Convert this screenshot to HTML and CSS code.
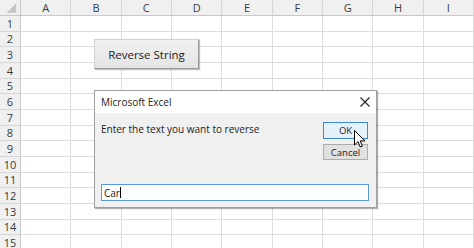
FILE: index.html
```html
<!DOCTYPE html>
<html>
<head>
<meta charset="utf-8">
<link rel="stylesheet" href="styles.css">
</head>
<body>
<div class="sheet">
  <div class="corner"><svg width="21" height="16" viewBox="0 0 21 16"><polygon points="17,3 17,13 7,13" fill="#c4c4c4"/></svg></div>
  <div class="colhead">A</div><div class="colhead">B</div><div class="colhead">C</div><div class="colhead">D</div><div class="colhead">E</div><div class="colhead">F</div><div class="colhead">G</div><div class="colhead">H</div><div class="colhead">I</div>
  <div class="rowhead">1</div><div class="cell"></div><div class="cell"></div><div class="cell"></div><div class="cell"></div><div class="cell"></div><div class="cell"></div><div class="cell"></div><div class="cell"></div><div class="cell"></div>
  <div class="rowhead">2</div><div class="cell"></div><div class="cell"></div><div class="cell"></div><div class="cell"></div><div class="cell"></div><div class="cell"></div><div class="cell"></div><div class="cell"></div><div class="cell"></div>
  <div class="rowhead">3</div><div class="cell"></div><div class="cell"></div><div class="cell"></div><div class="cell"></div><div class="cell"></div><div class="cell"></div><div class="cell"></div><div class="cell"></div><div class="cell"></div>
  <div class="rowhead">4</div><div class="cell"></div><div class="cell"></div><div class="cell"></div><div class="cell"></div><div class="cell"></div><div class="cell"></div><div class="cell"></div><div class="cell"></div><div class="cell"></div>
  <div class="rowhead">5</div><div class="cell"></div><div class="cell"></div><div class="cell"></div><div class="cell"></div><div class="cell"></div><div class="cell"></div><div class="cell"></div><div class="cell"></div><div class="cell"></div>
  <div class="rowhead">6</div><div class="cell"></div><div class="cell"></div><div class="cell"></div><div class="cell"></div><div class="cell"></div><div class="cell"></div><div class="cell"></div><div class="cell"></div><div class="cell"></div>
  <div class="rowhead">7</div><div class="cell"></div><div class="cell"></div><div class="cell"></div><div class="cell"></div><div class="cell"></div><div class="cell"></div><div class="cell"></div><div class="cell"></div><div class="cell"></div>
  <div class="rowhead">8</div><div class="cell"></div><div class="cell"></div><div class="cell"></div><div class="cell"></div><div class="cell"></div><div class="cell"></div><div class="cell"></div><div class="cell"></div><div class="cell"></div>
  <div class="rowhead">9</div><div class="cell"></div><div class="cell"></div><div class="cell"></div><div class="cell"></div><div class="cell"></div><div class="cell"></div><div class="cell"></div><div class="cell"></div><div class="cell"></div>
  <div class="rowhead">10</div><div class="cell"></div><div class="cell"></div><div class="cell"></div><div class="cell"></div><div class="cell"></div><div class="cell"></div><div class="cell"></div><div class="cell"></div><div class="cell"></div>
  <div class="rowhead">11</div><div class="cell"></div><div class="cell"></div><div class="cell"></div><div class="cell"></div><div class="cell"></div><div class="cell"></div><div class="cell"></div><div class="cell"></div><div class="cell"></div>
  <div class="rowhead">12</div><div class="cell"></div><div class="cell"></div><div class="cell"></div><div class="cell"></div><div class="cell"></div><div class="cell"></div><div class="cell"></div><div class="cell"></div><div class="cell"></div>
  <div class="rowhead">13</div><div class="cell"></div><div class="cell"></div><div class="cell"></div><div class="cell"></div><div class="cell"></div><div class="cell"></div><div class="cell"></div><div class="cell"></div><div class="cell"></div>
  <div class="rowhead">14</div><div class="cell"></div><div class="cell"></div><div class="cell"></div><div class="cell"></div><div class="cell"></div><div class="cell"></div><div class="cell"></div><div class="cell"></div><div class="cell"></div>
  <div class="rowhead">15</div><div class="cell"></div><div class="cell"></div><div class="cell"></div><div class="cell"></div><div class="cell"></div><div class="cell"></div><div class="cell"></div><div class="cell"></div><div class="cell"></div>
</div>

<div class="shape-btn">Reverse String</div>

<div class="dialog">
  <div class="titlebar">
    <span class="title">Microsoft Excel</span>
    <svg class="close" width="10" height="10" viewBox="0 0 10 10"><path d="M0.5 0.5 L9.5 9.5 M9.5 0.5 L0.5 9.5" stroke="#222" stroke-width="1.1" fill="none"/></svg>
  </div>
  <div class="body">
    <div class="top">
      <div class="prompt">Enter the text you want to reverse</div>
      <div class="buttons">
        <div class="btn ok">OK</div>
        <div class="btn">Cancel</div>
      </div>
    </div>
    <div class="input"><span class="val">Car</span><span class="caret"></span></div>
  </div>
</div>

<svg class="pointer" width="13" height="19" viewBox="0 0 13 19"><path d="M0.5 0.5 L0.5 15 L4 11.6 L6.3 17 L8.4 16.1 L6.2 10.9 L11 10.9 Z" fill="#fff" stroke="#000" stroke-width="1" stroke-linejoin="round"/></svg>
</body>
</html>
```

FILE: styles.css
```css
html, body {
  margin: 0;
  padding: 0;
  background: #fff;
  width: 474px;
  height: 248px;
  overflow: hidden;
  font-family: "Open Sans", "Noto Sans", sans-serif;
}
.sheet {
  display: grid;
  grid-template-columns: 21px repeat(9, 50.33px);
  grid-template-rows: 16px repeat(15, 15.67px);
}
.corner {
  background: #f0f0f0;
  border-right: 1px solid #c8c8c8;
  border-bottom: 1px solid #c8c8c8;
  box-sizing: border-box;
  display: flex;
}
.colhead {
  background: #f0f0f0;
  border-right: 1px solid #d6d6d6;
  border-bottom: 1px solid #c8c8c8;
  box-sizing: border-box;
  font-size: 11px;
  color: #3a3a3a;
  display: flex;
  align-items: center;
  justify-content: center;
}
.rowhead {
  background: #f0f0f0;
  border-right: 1px solid #c8c8c8;
  border-bottom: 1px solid #d6d6d6;
  box-sizing: border-box;
  font-size: 11px;
  color: #3a3a3a;
  display: flex;
  align-items: center;
  justify-content: center;
}
.cell {
  border-right: 1px solid #dcdcdc;
  border-bottom: 1px solid #dcdcdc;
  box-sizing: border-box;
}
.shape-btn {
  position: absolute;
  left: 94px;
  top: 39px;
  width: 105px;
  height: 30px;
  box-sizing: border-box;
  background: linear-gradient(#f1f1f1, #e4e4e4);
  border: 1px solid #d0d0d0;
  border-right-color: #9c9c9c;
  border-bottom-color: #9c9c9c;
  box-shadow: 1px 1px 1px rgba(0,0,0,0.25);
  display: flex;
  align-items: center;
  justify-content: center;
  font-size: 11.5px;
  color: #222;
}
.dialog {
  position: absolute;
  left: 94px;
  top: 90px;
  width: 283px;
  height: 118px;
  box-sizing: border-box;
  border: 1px solid #a0a0a0;
  box-shadow: 1px 1px 1px rgba(0,0,0,0.3);
  background: #f0f0f0;
  display: flex;
  flex-direction: column;
}
.titlebar {
  background: #fff;
  height: 22px;
  display: flex;
  align-items: center;
  justify-content: space-between;
  padding: 0 6px 0 6px;
}
.title {
  font-size: 10px;
  color: #222;
}
.close {
  display: block;
}
.body {
  flex: 1;
  padding: 9px 7px 0 6px;
  display: flex;
  flex-direction: column;
}
.top {
  display: flex;
  justify-content: space-between;
  align-items: flex-start;
  height: 62px;
}
.prompt {
  font-size: 10px;
  color: #222;
}
.buttons {
  display: flex;
  flex-direction: column;
  gap: 5px;
  margin-right: 1px;
}
.btn {
  width: 45px;
  height: 16px;
  box-sizing: border-box;
  background: #e1e1e1;
  border: 1px solid #adadad;
  font-size: 9.5px;
  color: #222;
  display: flex;
  align-items: center;
  justify-content: center;
}
.btn.ok {
  background: #e5f1fb;
  border-color: #3c8ad9;
  height: 17px;
}
.input {
  height: 17px;
  box-sizing: border-box;
  border: 1px solid #5b9bd5;
  background: #fff;
  display: flex;
  align-items: center;
  padding-left: 2px;
  font-size: 10px;
  color: #222;
}
.caret {
  display: inline-block;
  width: 1px;
  height: 11px;
  background: #000;
}
.pointer {
  position: absolute;
  left: 354px;
  top: 130px;
}
```
